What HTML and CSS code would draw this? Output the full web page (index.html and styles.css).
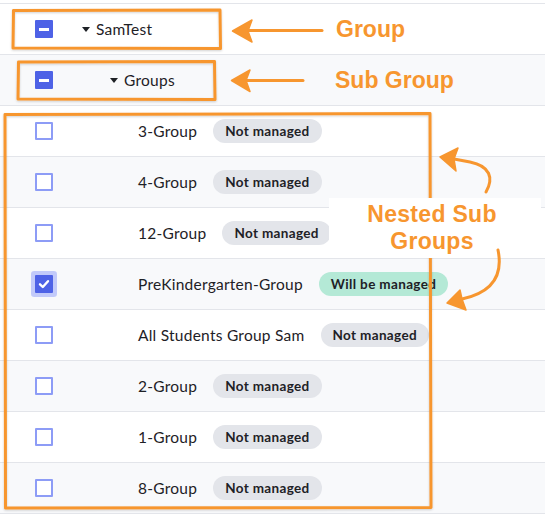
FILE: index.html
```html
<!DOCTYPE html>
<html lang="en">
<head>
<meta charset="utf-8">
<title>Groups</title>
<link rel="stylesheet" href="styles.css">
</head>
<body>
<div class="page">
  <div class="table">
    <div class="row">
      <span class="cb cb-ind"></span>
      <span class="name lvl0"><span class="caret"></span>SamTest</span>
    </div>
    <div class="row">
      <span class="cb cb-ind"></span>
      <span class="name lvl1"><span class="caret"></span>Groups</span>
    </div>
    <div class="row">
      <span class="cb"></span>
      <span class="name lvl2">3-Group</span><span class="badge">Not managed</span>
    </div>
    <div class="row">
      <span class="cb"></span>
      <span class="name lvl2">4-Group</span><span class="badge">Not managed</span>
    </div>
    <div class="row">
      <span class="cb"></span>
      <span class="name lvl2">12-Group</span><span class="badge">Not managed</span>
    </div>
    <div class="row">
      <span class="cb cb-checked"><svg viewBox="0 0 18 18" width="18" height="18"><path d="M5 9.3 L7.8 12 L13 6.2" fill="none" stroke="#fff" stroke-width="2.4" stroke-linecap="round" stroke-linejoin="round"/></svg></span>
      <span class="name lvl2">PreKindergarten-Group</span><span class="badge badge-green">Will be managed</span>
    </div>
    <div class="row">
      <span class="cb"></span>
      <span class="name lvl2">All Students Group Sam</span><span class="badge">Not managed</span>
    </div>
    <div class="row">
      <span class="cb"></span>
      <span class="name lvl2">2-Group</span><span class="badge">Not managed</span>
    </div>
    <div class="row">
      <span class="cb"></span>
      <span class="name lvl2">1-Group</span><span class="badge">Not managed</span>
    </div>
    <div class="row">
      <span class="cb"></span>
      <span class="name lvl2">8-Group</span><span class="badge">Not managed</span>
    </div>
  </div>

  <svg class="marks" viewBox="0 0 545 515" width="545" height="515">
    <defs>
      <filter id="sh" x="-5%" y="-5%" width="110%" height="110%">
        <feDropShadow dx="0" dy="1" stdDeviation="0.8" flood-color="#000" flood-opacity="0.18"/>
      </filter>
    </defs>
    <g fill="none" stroke="#f7962f" stroke-width="3" stroke-linejoin="round" filter="url(#sh)">
      <path d="M13.5 10.5 L220 10 L220.5 48.5 L13 48 Z"/>
      <path d="M18.5 62 L214.5 61.5 L215 99.5 L18 99 Z"/>
      <path d="M5 114.5 L430 113.5 L431 507.5 L5.5 508 Z"/>
    </g>
    <g fill="#f7962f" stroke="#f7962f" stroke-linecap="round" stroke-linejoin="round">
      <path d="M248 30.5 L322 30.5" stroke-width="3" fill="none"/>
      <path d="M232.5 31 L252 20 L248 31 L252 42 Z" stroke-width="1.5"/>
      <path d="M247 80.5 L303 80.5" stroke-width="3" fill="none"/>
      <path d="M231.5 80.5 L250 70 L246 80.5 L250 91.5 Z" stroke-width="1.5"/>
    </g>
  </svg>

  <div class="label label-group">Group</div>
  <div class="label label-sub">Sub Group</div>
  <div class="label label-nested">Nested Sub<br>Groups</div>

  <svg class="marks" viewBox="0 0 545 515" width="545" height="515">
    <g fill="#f7962f" stroke="#f7962f" stroke-linecap="round" stroke-linejoin="round">
      <path d="M486 192 C494 178 490 166 470 162 L454 159" stroke-width="3" fill="none"/>
      <path d="M440 157 L458 148 L454 159 L456 171 Z" stroke-width="1.5"/>
      <path d="M498 250 C503 274 494 292 462 299" stroke-width="3" fill="none"/>
      <path d="M447 303 L460 290 L462 299 L466 310 Z" stroke-width="1.5"/>
    </g>
  </svg>
</div>
</body>
</html>
```

FILE: styles.css
```css
* { box-sizing: border-box; }
html, body { margin: 0; padding: 0; background: #fff; }
body {
  font-family: "Lato", "Liberation Sans", sans-serif;
  color: #1e2126;
}
.page {
  position: relative;
  width: 545px;
  height: 515px;
  overflow: hidden;
  padding-top: 3px;
}
.table {
  display: flex;
  flex-direction: column;
}
.row {
  display: flex;
  align-items: center;
  height: 51px;
  border-top: 1px solid #e3e5ea;
  padding-left: 35px;
  background: #fff;
}
.row:nth-child(even) { background: #f8f9fb; }
.row:last-child { border-bottom: 1px solid #e3e5ea; height: 52px; }

.cb {
  width: 18px;
  height: 18px;
  flex: none;
  border: 2px solid #8d9cf6;
  border-radius: 1px;
  background: #fff;
  position: relative;
}
.cb-ind {
  background: #4e62e6;
  border-color: #4e62e6;
}
.cb-ind::after {
  content: "";
  position: absolute;
  left: 2px;
  top: 5.5px;
  width: 10px;
  height: 3px;
  background: #fff;
}
.cb-checked {
  background: #4e62e6;
  border-color: #4e62e6;
  box-shadow: 0 0 0 4px #c2cafa;
}
.cb-checked svg { position: absolute; left: -2px; top: -2px; }

.name {
  display: flex;
  align-items: center;
  font-size: 15.5px;
  letter-spacing: 0.25px;
}
.lvl0 { padding-left: 29px; }
.lvl1 { padding-left: 57px; }
.lvl2 { padding-left: 85px; }
.caret {
  width: 0;
  height: 0;
  border-left: 4.5px solid transparent;
  border-right: 4.5px solid transparent;
  border-top: 5px solid #1e2126;
  margin-right: 6px;
}
.badge {
  margin-left: 16px;
  height: 24px;
  line-height: 24px;
  padding: 0 12px;
  border-radius: 12px;
  background: #e3e5ea;
  font-size: 13.5px;
  font-weight: 700;
  color: #1e2126;
  letter-spacing: 0.35px;
}
.badge-green { background: #b4e9d6; }

.marks {
  position: absolute;
  left: 0;
  top: 0;
  pointer-events: none;
}
.label {
  position: absolute;
  font-family: "Liberation Sans", Arial, sans-serif;
  font-weight: 700;
  font-size: 23px;
  color: #f7962f;
  line-height: 27px;
}
.label-group { left: 336px; top: 16px; }
.label-sub { left: 335px; top: 67px; }
.label-nested {
  left: 329px;
  top: 198px;
  width: 212px;
  height: 60px;
  background: #fff;
  text-align: center;
  padding-top: 3px;
  padding-right: 6px;
  letter-spacing: 0.3px;
}
```
